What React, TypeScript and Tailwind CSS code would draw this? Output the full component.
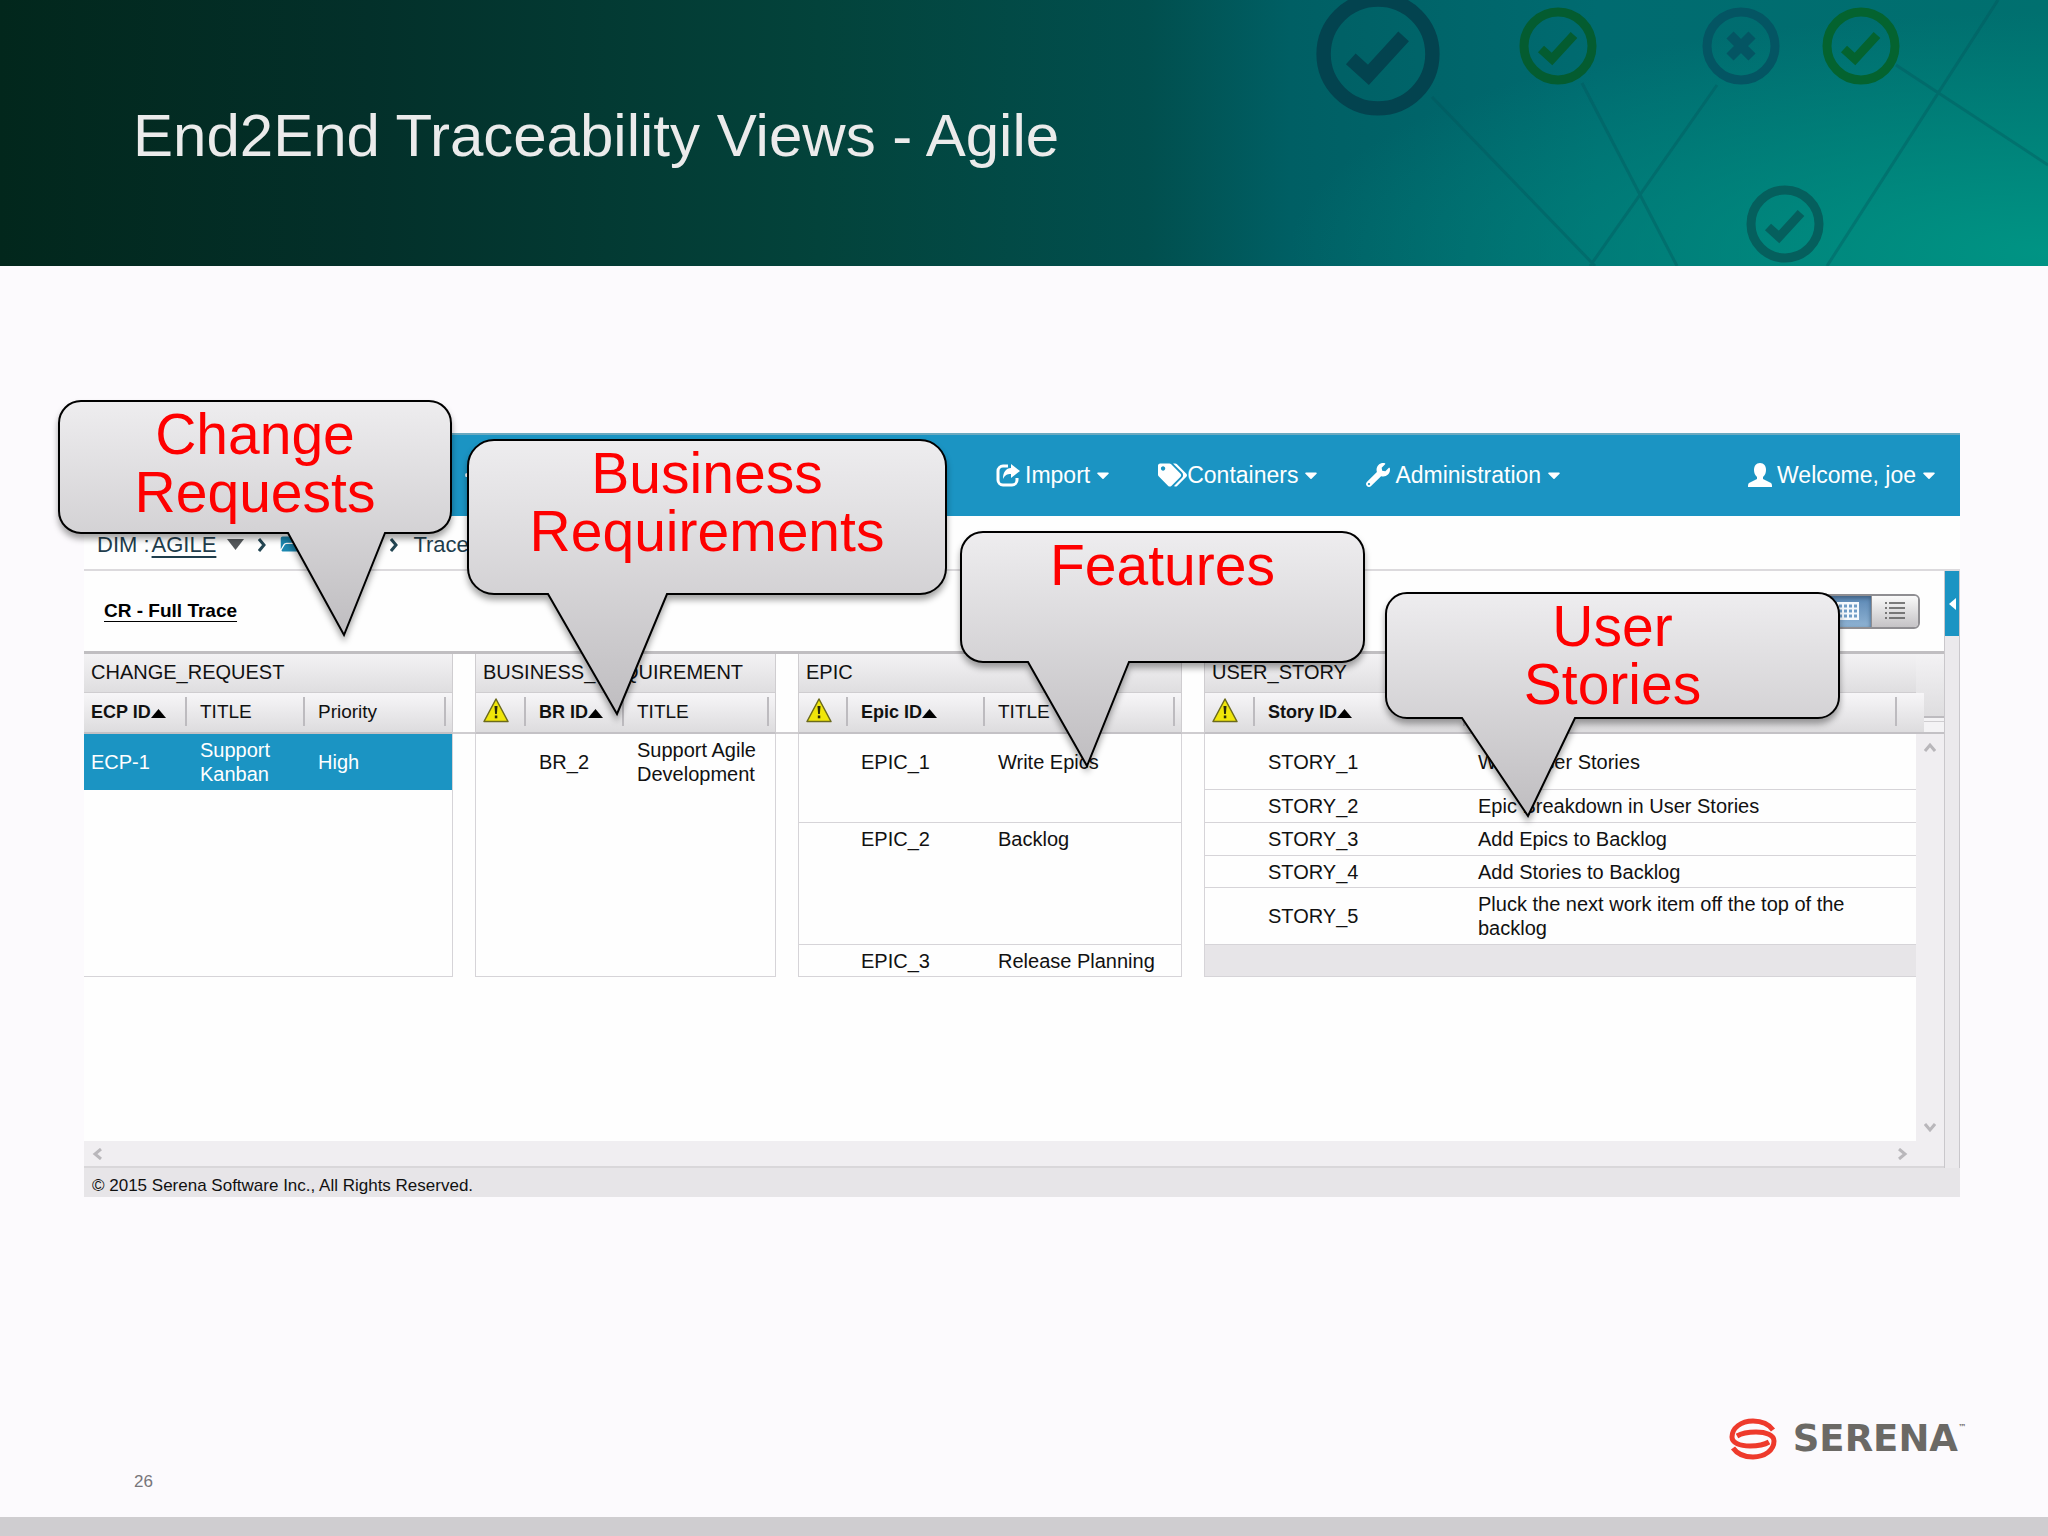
import type { ReactNode } from 'react'
import { FaCaretDown, FaFolderOpen, FaPlus, FaTags, FaWrench } from 'react-icons/fa'

const callouts = [
  {
    lines: ['Change', 'Requests'],
    place: 'left-[59px] top-[135px] w-[392px]',
    width: 392,
    height: 132,
    tail: [229, 326, 285, 234],
  },
  {
    lines: ['Business', 'Requirements'],
    place: 'left-[468px] top-[174px] w-[478px]',
    width: 478,
    height: 154,
    tail: [80, 199, 149, 274],
  },
  {
    lines: ['Features'],
    place: 'left-[961px] top-[266px] w-[403px]',
    width: 403,
    height: 130,
    tail: [67, 168, 126, 234],
  },
  {
    lines: ['User', 'Stories'],
    place: 'left-[1386px] top-[327px] w-[453px]',
    width: 453,
    height: 125,
    tail: [76, 189, 142, 223],
  },
]

function ShareIcon() {
  return (
    <svg viewBox="0 0 24 24" className="h-6 w-6" aria-hidden="true">
      <path
        d="M12 3H7a5 5 0 0 0-5 5v9a5 5 0 0 0 5 5h9a5 5 0 0 0 5-5v-2"
        fill="none"
        stroke="currentColor"
        strokeWidth="3"
      />
      <path d="M15 1l9 7-9 7v-4c-4 0-6 1-8 5 0-7 3-11 8-11z" fill="currentColor" />
    </svg>
  )
}

function UserIcon() {
  return (
    <svg viewBox="0 0 24 24" className="h-6 w-6" aria-hidden="true">
      <path
        d="M12 0c4 0 6 3 6 7 0 3-1 5-3 7v2l8 4c1 1 1 2 1 4H0c0-2 0-3 1-4l8-4v-2c-2-2-3-4-3-7 0-4 2-7 6-7z"
        fill="currentColor"
      />
    </svg>
  )
}

function WarningIcon() {
  return (
    <svg viewBox="0 0 26 26" className="mb-1 h-[26px] w-[26px]" aria-hidden="true">
      <path d="M13 2L25 24.500H1z" fill="#f0e60a" stroke="#6b6a1c" strokeWidth="1.500" strokeLinejoin="round" />
      <path d="M11.500 9h3l-.6 8h-1.800z" fill="#2a2a08" />
      <rect x="11.800" y="18.500" width="2.500" height="2.800" fill="#2a2a08" />
    </svg>
  )
}

function NavItem({ icon, label, tight }: { icon: ReactNode; label: string; tight?: boolean }) {
  return (
    <button type="button" className={tight ? 'flex items-center' : 'flex items-center gap-[5px]'}>
      {icon}
      <span className="flex items-center gap-[6px]">
        {label}
        <FaCaretDown className="h-5 w-[14px]" aria-hidden="true" />
      </span>
    </button>
  )
}

function Badge({ x, y, color, size = 1, cross }: { x: number; y: number; color: string; size?: number; cross?: boolean }) {
  return (
    <g transform={`translate(${x} ${y}) scale(${size})`} stroke={color} fill="none" strokeWidth="9">
      <circle r="34" />
      {cross ? <path d="M-11-11L11 11M11-11L-11 11" strokeWidth="10" /> : <path d="M-17 3L-6 13L16-11" />}
    </g>
  )
}

function Banner() {
  return (
    <header className="relative flex h-[266px] items-center bg-[linear-gradient(90deg,#02271c_0%,#03302a_18%,#03433b_40%,#014f4e_56%,#005f64_63%,#006b70_78%,#00706f_100%)] pt-[6px] pl-[133px]">
      <div className="absolute inset-0 bg-[radial-gradient(ellipse_760px_240px_at_100%_95%,#009484,transparent)]" />
      <svg viewBox="0 0 800 266" className="absolute top-0 right-0 h-full w-[800px]" aria-hidden="true">
        <path
          d="M184 97L347 266M334 83L429 266M469 85L342 266M648 65L800 165M750 0L579 266"
          stroke="#02525a"
          strokeOpacity=".35"
          strokeWidth="3"
        />
        <Badge x={130} y={54} color="#03434f" size={1.6} />
        <Badge x={310} y={46} color="#045c30" />
        <Badge x={493} y={46} color="#045563" cross />
        <Badge x={613} y={46} color="#04632f" />
        <Badge x={537} y={224} color="#055f5d" />
      </svg>
      <h1 className="relative text-[60px] leading-[68px] text-[#ebebeb]">End2End Traceability Views - Agile</h1>
    </header>
  )
}

function Group({ label, span }: { label: string; span: number }) {
  return (
    <th
      colSpan={span}
      className="h-[39px] border-x border-b border-[#cfcdd0] bg-linear-to-b from-[#f3f2f4] to-[#dfdee0] pb-0.5 pl-[7px] text-left text-[20px] font-normal first:border-l-0 last:border-r-0"
    >
      {label}
    </th>
  )
}

function Column({ children, sorted, edge }: { children?: ReactNode; sorted?: boolean; edge?: 'left' | 'right' | 'last' }) {
  return (
    <th
      className={`h-[41px] border-b-2 border-[#c3c1c5] bg-linear-to-b from-[#f7f6f8] to-[#dddcde] pb-0.5 pl-[7px] text-left text-[19px] font-normal ${
        edge === 'left' ? 'border-l border-l-[#cfcdd0]' : ''
      } ${edge === 'right' ? 'border-r border-r-[#cfcdd0]' : ''} ${edge === 'last' ? 'pr-[19px]' : 'pr-[6px]'}`}
    >
      <div className="flex items-center justify-between">
        {sorted ? (
          <span className="flex items-center text-[18px] font-bold">
            {children}
            <svg viewBox="0 0 15 9" className="mt-1 h-[9px] w-[15px]" aria-hidden="true">
              <path d="M0 9L7.500 0L15 9z" />
            </svg>
          </span>
        ) : (
          children
        )}
        <span className="ml-auto h-[29px] w-0.5 bg-[#bdbbbf]" />
      </div>
    </th>
  )
}

function Gap() {
  return <td className="border-b-2 border-[#cfcdd0]" />
}

function Story({ id, title }: { id: string; title: string }) {
  return (
    <>
      <td className="border-b border-l border-[#d6d4d8]" />
      <td className="border-b border-[#d6d4d8] pl-[7px]">{id}</td>
      <td className="border-b border-[#d6d4d8] pr-10 pl-[7px]">{title}</td>
    </>
  )
}

function Epic({ id, title, span, first }: { id: string; title: string; span: number; first?: boolean }) {
  const pad = first ? 'pt-4' : 'pt-1'
  return (
    <>
      <td rowSpan={span} className="border-b border-l border-[#d6d4d8]" />
      <td rowSpan={span} className={`border-b border-[#d6d4d8] pl-[7px] align-top ${pad}`}>
        {id}
      </td>
      <td rowSpan={span} className={`border-r border-b border-[#d6d4d8] pl-[7px] align-top ${pad}`}>
        {title}
      </td>
    </>
  )
}

function TraceTable() {
  return (
    <table className="w-full table-fixed border-separate border-spacing-0 text-[20px] leading-6 text-[#111]">
      <colgroup>
        <col className="w-[109px]" />
        <col className="w-[118px]" />
        <col className="w-[142px]" />
        <col className="w-[22px]" />
        <col className="w-[57px]" />
        <col className="w-[98px]" />
        <col className="w-[146px]" />
        <col className="w-[22px]" />
        <col className="w-[56px]" />
        <col className="w-[137px]" />
        <col className="w-[191px]" />
        <col className="w-[22px]" />
        <col className="w-[57px]" />
        <col className="w-[210px]" />
        <col />
      </colgroup>
      <thead>
        <tr>
          <Group label="CHANGE_REQUEST" span={3} />
          <td />
          <Group label="BUSINESS_REQUIREMENT" span={3} />
          <td />
          <Group label="EPIC" span={3} />
          <td />
          <Group label="USER_STORY" span={3} />
        </tr>
        <tr>
          <Column sorted>ECP ID</Column>
          <Column>TITLE</Column>
          <Column edge="right">Priority</Column>
          <Gap />
          <Column edge="left">
            <WarningIcon />
          </Column>
          <Column sorted>BR ID</Column>
          <Column edge="right">TITLE</Column>
          <Gap />
          <Column edge="left">
            <WarningIcon />
          </Column>
          <Column sorted>Epic ID</Column>
          <Column edge="right">TITLE</Column>
          <Gap />
          <Column edge="left">
            <WarningIcon />
          </Column>
          <Column sorted>Story ID</Column>
          <Column edge="last">TITLE</Column>
        </tr>
      </thead>
      <tbody>
        <tr className="h-14">
          <td className="bg-[#1b94c3] pl-[7px] text-white">ECP-1</td>
          <td className="bg-[#1b94c3] pr-8 pl-[7px] text-white">Support Kanban</td>
          <td className="border-r border-[#d6d4d8] bg-[#1b94c3] pl-[7px] text-white">High</td>
          <td rowSpan={6} />
          <td className="border-l border-[#d6d4d8]" />
          <td className="pl-[7px]">BR_2</td>
          <td className="border-r border-[#d6d4d8] pl-[7px]">Support Agile Development</td>
          <td rowSpan={6} />
          <Epic id="EPIC_1" title="Write Epics" span={2} first />
          <td rowSpan={6} />
          <Story id="STORY_1" title="Write User Stories" />
        </tr>
        <tr className="h-[33px]">
          <td rowSpan={5} colSpan={3} className="border-r border-b border-[#d6d4d8]" />
          <td rowSpan={5} colSpan={3} className="border-x border-b border-[#d6d4d8]" />
          <Story id="STORY_2" title="Epic Breakdown in User Stories" />
        </tr>
        <tr className="h-[33px]">
          <Epic id="EPIC_2" title="Backlog" span={3} />
          <Story id="STORY_3" title="Add Epics to Backlog" />
        </tr>
        <tr className="h-8">
          <Story id="STORY_4" title="Add Stories to Backlog" />
        </tr>
        <tr className="h-[57px]">
          <Story id="STORY_5" title="Pluck the next work item off the top of the backlog" />
        </tr>
        <tr className="h-8">
          <Epic id="EPIC_3" title="Release Planning" span={1} />
          <td colSpan={3} className="border-b border-l border-[#d6d4d8] bg-[#e7e5e8]" />
        </tr>
      </tbody>
    </table>
  )
}

function ScrollArrow({ d }: { d: string }) {
  return (
    <svg viewBox="0 0 12 12" className="h-3 w-3" aria-hidden="true">
      <path d={d} fill="none" stroke="#b9b7bb" strokeWidth="3" />
    </svg>
  )
}

function Crumb() {
  return (
    <svg viewBox="0 0 9 14" className="mt-0.5 h-[14px] w-[9px]" aria-hidden="true">
      <path d="M1 1l5 6-5 6" fill="none" stroke="#234653" strokeWidth="3" />
    </svg>
  )
}

function AppWindow() {
  return (
    <section className="mr-[88px] ml-[84px] bg-[#fefefe]">
      <nav className="flex h-[83px] items-center border-t-2 border-[#6aa9c0] bg-[#1b94c3] pr-6 pb-px pl-[380px] text-[23px] text-white">
        <FaPlus className="mr-[512px] h-5 w-5" aria-hidden="true" />
        <div className="flex gap-12">
          <NavItem icon={<ShareIcon />} label="Import" />
          <NavItem icon={<FaTags className="h-7 w-[29px]" aria-hidden="true" />} label="Containers" tight />
          <NavItem icon={<FaWrench className="h-6 w-6" aria-hidden="true" />} label="Administration" />
        </div>
        <div className="ml-auto">
          <NavItem icon={<UserIcon />} label="Welcome, joe" />
        </div>
      </nav>

      {/* Breadcrumb */}
      <div className="flex h-[55px] items-center border-b-2 border-[#dcdadd] pt-[3px] pl-[13px] text-[22px] text-[#1f3d4c]">
        <span>DIM :</span>
        <a href="#agile" className="ml-0.5 underline underline-offset-4">
          AGILE
        </a>
        <svg viewBox="0 0 17 11" className="mr-[14px] ml-[11px] h-[11px] w-[17px]" aria-hidden="true">
          <path d="M0 0h17L8.500 11z" fill="#55595c" />
        </svg>
        <Crumb />
        <FaFolderOpen className="mr-[86px] ml-[13px] h-5 w-6 text-[#1b87b0]" aria-hidden="true" />
        <Crumb />
        <span className="ml-[14px]">Trace</span>
      </div>

      <div className="flex">
        <div className="min-w-0 flex-1">
          <div className="flex h-[83px] items-center justify-between border-b-3 border-[#c0bec1] pr-6 pl-5">
            <a href="#trace" className="text-[19px] font-bold text-black underline underline-offset-4">
              CR - Full Trace
            </a>
            <div className="flex h-[35px] overflow-hidden rounded-md border-2 border-[#8f8e92]">
              <button
                type="button"
                aria-label="Grid"
                className="flex w-[47px] items-center justify-center bg-linear-to-b from-[#5b87b4] to-[#8fb3d3] shadow-[inset_0_2px_4px_#3f5f80]"
              >
                <svg viewBox="0 0 22 18" className="h-[18px] w-[22px]" aria-hidden="true">
                  <rect width="22" height="18" fill="#f4f8fc" />
                  <path d="M2 4h18M2 9h18M2 14h18" stroke="#6f9cc6" strokeWidth="3" strokeDasharray="3 2" />
                </svg>
              </button>
              <button
                type="button"
                aria-label="List"
                className="flex w-[47px] items-center justify-center border-l border-[#8f8e92] bg-linear-to-b from-[#fafafa] to-[#c5c3c6]"
              >
                <svg viewBox="0 0 20 18" className="h-[18px] w-5" aria-hidden="true">
                  <path d="M0 1h2M4 1h16M0 6h2M4 6h16M0 11h2M4 11h16M0 16h2M4 16h16" stroke="#555" strokeWidth="1.500" />
                </svg>
              </button>
            </div>
          </div>

          <div className="flex">
            <div className="min-w-0 flex-1 pb-[164px]">
              <TraceTable />
            </div>
            <div className="flex w-[28px] flex-col">
              <div className="flex h-20 border-b-2 border-[#c3c1c5] bg-linear-to-b from-[#f3f2f4] to-[#d9d8da]">
                <div className="mt-[39px] w-2 bg-linear-to-b from-[#f7f6f8] to-[#dddcde]" />
                <div className="mt-[62px] flex-1 border-t-2 border-[#bdbbbf] bg-[#f4f3f5]">
                  <div className="mt-[3px] border-t border-[#cfcdd0]" />
                </div>
              </div>
              <div className="flex flex-1 flex-col items-center justify-between bg-[#f0eef1] py-2">
                <ScrollArrow d="M1 9l5-6 5 6" />
                <ScrollArrow d="M1 3l5 6 5-6" />
              </div>
            </div>
          </div>
          <div className="flex h-[27px] items-center justify-between border-b-2 border-[#d9d7da] bg-[#f0eef1] pr-9 pl-2">
            <ScrollArrow d="M9 1L3 6l6 5" />
            <ScrollArrow d="M3 1l6 5-6 5" />
          </div>
        </div>

        {/* Side panel splitter */}
        <div className="w-4 border-x border-[#c9c7cb] bg-[#ebe9ec]">
          <button type="button" aria-label="Expand" className="flex h-[65px] w-full items-center justify-center bg-[#1b94c3]">
            <svg viewBox="0 0 7 12" className="h-3 w-[7px]" aria-hidden="true">
              <path d="M7 0v12L0 6z" fill="#fff" />
            </svg>
          </button>
        </div>
      </div>

      <div className="h-[29px] bg-[#e7e5e8] pt-0.5 pl-2 text-[17px] leading-8 text-[#111]">
        © 2015 Serena Software Inc., All Rights Reserved.
      </div>
    </section>
  )
}

function Callout({ lines, place, width: w, height: h, tail }: (typeof callouts)[number]) {
  const r = Math.round(h / 6)
  const [left, right, tipX, tipY] = tail
  const d = `M${r} 0H${w - r}A${r} ${r} 0 0 1 ${w} ${r}V${h - r}A${r} ${r} 0 0 1 ${w - r} ${h}H${right}L${tipX} ${tipY}L${left} ${h}H${r}A${r} ${r} 0 0 1 0 ${h - r}V${r}A${r} ${r} 0 0 1 ${r} 0z`
  return (
    <div className={`absolute ${place}`}>
      <svg
        viewBox={`0 0 ${w} ${tipY}`}
        className="absolute top-0 left-0 w-full overflow-visible drop-shadow-[0_5px_3px_rgba(0,0,0,0.35)]"
        aria-hidden="true"
      >
        <defs>
          <linearGradient id={`fill-${w}`} x1="0" y1="0" x2="0" y2="1">
            <stop offset="0" stopColor="#eeedef" />
            <stop offset="1" stopColor="#bfbdc0" />
          </linearGradient>
        </defs>
        <path d={d} fill={`url(#fill-${w})`} stroke="#000" strokeWidth="2" />
      </svg>
      <p className="relative pt-1 text-center text-[57px] leading-[58px] text-[#fe0000]">
        {lines.map((line) => (
          <span key={line} className="block">
            {line}
          </span>
        ))}
      </p>
    </div>
  )
}

function Logo() {
  return (
    <div className="flex items-center gap-4">
      <svg viewBox="0 0 48 42" className="h-[42px] w-12" aria-hidden="true">
        <g fill="none" stroke="#ee3a2c">
          <path d="M44 12C39 5 31 3 24 3C12 3 3 10 3 19c0 6 8 9 18 9 8 0 14-1 19-4" strokeWidth="5" />
          <path d="M4 30c5 7 13 9 20 9 12 0 21-7 21-16 0-6-8-9-18-9-8 0-14 1-19 4" strokeWidth="5" />
        </g>
      </svg>
      <span className="flex items-start font-['DejaVu_Sans'] text-[37px] leading-[42px] font-bold text-[#6b6965]">
        SERENA
        <sup className="top-0 mt-1 text-[8px] leading-3">™</sup>
      </span>
    </div>
  )
}

export default function App() {
  return (
    <div className="flex min-h-screen flex-col bg-[#fcfafd] font-['Liberation_Sans',sans-serif]">
      <Banner />
      <main className="relative flex-1 pt-[167px]">
        <AppWindow />
        {callouts.map((callout) => (
          <Callout key={callout.place} {...callout} />
        ))}
      </main>
      <footer className="flex h-[118px] items-start justify-between border-b-[19px] border-[#cfcdd0] pr-[82px] pl-[134px]">
        <span className="mt-[54px] text-[17px] leading-5 text-[#77757a]">26</span>
        <Logo />
      </footer>
    </div>
  )
}
